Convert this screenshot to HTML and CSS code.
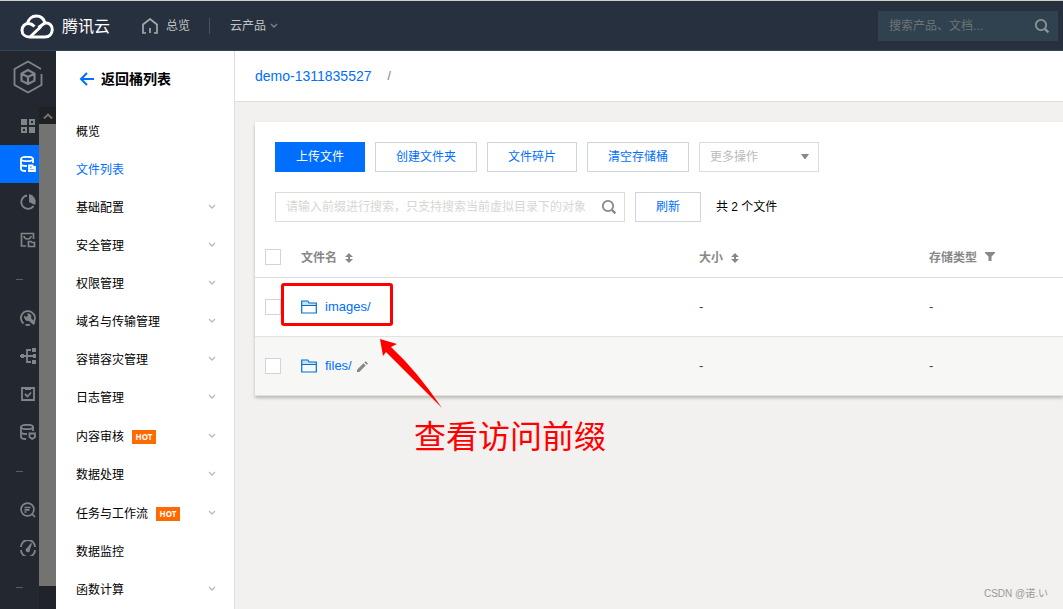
FILE: index.html
```html
<!DOCTYPE html>
<html lang="zh-CN">
<head>
<meta charset="utf-8">
<title>文件列表 - 腾讯云</title>
<link rel="stylesheet" href="styles.css">
</head>
<body>
<svg class="defs" aria-hidden="true">
  <symbol id="chev" viewBox="0 0 8 6"><path d="M1 1l3 3 3-3" fill="none" stroke="currentColor" stroke-width="1.3"/></symbol>
  <symbol id="search" viewBox="0 0 16 16"><circle cx="7" cy="7" r="5.2" fill="none" stroke="currentColor" stroke-width="1.8"/><path d="M11 11l3.4 3.4" stroke="currentColor" stroke-width="2.4"/></symbol>
  <symbol id="sort" viewBox="0 0 8 10"><path d="M4 0l4 4H5v2h3l-4 4-4-4h3V4H0z" fill="currentColor"/></symbol>
  <symbol id="folder" viewBox="0 0 16 14"><path d="M1 5V1h6l1.5 2H15v2z" fill="#c5e2f4"/><path d="M.7 1h6.1l1.2 2h7.3v10H.7zM.7 5.5h14.6" fill="none" stroke="#0071ce" stroke-width="1.2"/></symbol>
</svg>
<header class="topbar">
  <a class="brand" href="#">
    <svg class="brand-logo" viewBox="0 0 34 25"><g fill="none" stroke="#fff" stroke-width="3" stroke-linejoin="round"><path d="M18.5 13.5l6-4.3c5-1 8 2.6 7.8 6.5-.2 4-3 7.300-7.300 7.300H9.500c-4.500 0-7.500-3-7.500-6.800 0-4 3-6.700 6.500-6.700 2.800 0 4.300 1.200 6 3"/><path d="M7.500 9.500C8.500 5 12 2 16.300 2c4.200 0 7.500 2.600 8.600 6.800M10.500 22.500l10.500-10"/></g></svg>
    <span>腾讯云</span>
  </a>
  <nav class="topnav" aria-label="主导航">
    <a class="home" href="#"><svg class="i16" viewBox="0 0 16 16"><path d="M4 15H1V6.500L8 1l7 5.500V15h-3M8 15V10" fill="none" stroke="#a3aaa8" stroke-width="1.7"/></svg>总览</a>
    <span class="sep"></span>
    <a class="products" href="#">云产品<svg class="chev"><use href="#chev"/></svg></a>
  </nav>
  <form class="top-search">
    <input type="text" aria-label="搜索产品、文档" placeholder="搜索产品、文档...">
    <button type="button" aria-label="搜索"><svg class="i16"><use href="#search"/></svg></button>
  </form>
</header>
<div class="shell">
  <aside class="rail">
    <a class="hex" href="#" aria-label="控制台"><svg viewBox="0 0 30 34" fill="none" stroke="currentColor" stroke-width="1.8"><path d="M28.500 14V25L15 32.500 1.500 25V9L15 1.500 28 9"/><path stroke-width="2.2" d="M15 10l6.500 3.600v7L15 24l-6.500-3.400v-7zM8.500 13.600L15 17l6.500-3.400M15 17v7"/></svg></a>
    <div class="rail-body">
      <nav class="rail-nav" aria-label="产品">
        <a href="#" aria-label="概览"><svg class="i16" viewBox="0 0 16 16"><path fill="currentColor" d="M1 1h6v6H1zM9 9h6v6H9z"/><path fill="none" stroke="currentColor" stroke-width="2" d="M10 2h4v4h-4zM2 10h4v4H2z"/></svg></a>
        <a class="on" href="#" aria-label="存储桶列表"><svg class="i16" viewBox="0 0 16 16" fill="none" stroke="currentColor" stroke-width="1.8"><ellipse cx="7" cy="3" rx="6" ry="2.2"/><path d="M1 3v10c0 1 2 2 5 2M13 3v4M1 8c0 1.500 3 2 6 2"/><path d="M9 15h6v-4h-2.500V9.500H9zM9 12.500h6"/></svg></a>
        <a href="#" aria-label="统计"><svg class="i16" viewBox="0 0 16 16"><path d="M7 1.500A6.700 6.700 0 1 0 13.500 12" fill="none" stroke="currentColor" stroke-width="1.8"/><path fill="currentColor" d="M9 0a8 8 0 0 1 6 11L9 8z"/></svg></a>
        <a href="#" aria-label="文件"><svg class="i16" viewBox="0 0 16 16" fill="none" stroke="currentColor" stroke-width="1.7"><path d="M6 14H1.500V1.500h12V7M4 4c.5 4 6.500 4 7 0M8.500 14.500h6v-4H12l-1-1H8.500z"/></svg></a>
        <span class="rail-sep"></span>
        <a href="#" aria-label="工具"><svg class="i16" viewBox="0 0 16 16"><path d="M3.500 13.500A7 7 0 1 1 14 11.500M5.500 14.600a7 7 0 0 0 4.500 0" fill="none" stroke="currentColor" stroke-width="1.8"/><path fill="currentColor" d="M4 5.500l2.500 1.500L8 5.500 7 3.500c4-.5 5 2.500 4 4.500l4.500 4.500-2 2.500L9 11c-3 .5-5-2-5-5.500z"/></svg></a>
        <a href="#" aria-label="迁移"><svg class="i16" viewBox="0 0 16 16"><path d="M0 8h14M11 2H7v12h4" fill="none" stroke="currentColor" stroke-width="1.8"/><path fill="currentColor" d="M12 0h4v4h-4zM12 12h4v4h-4zM1 6h3v4H1zM13 6h3v4h-3z"/></svg></a>
        <a href="#" aria-label="任务"><svg class="i16" viewBox="0 0 16 16" fill="none" stroke="currentColor" stroke-width="1.8"><path d="M2 2h12v12H2zM5 3h6M5 8l2.500 2.500L11 6.500"/></svg></a>
        <a href="#" aria-label="数据"><svg class="i16" viewBox="0 0 16 16" fill="none" stroke="currentColor" stroke-width="1.8"><ellipse cx="7" cy="3" rx="6" ry="2.2"/><path d="M1 3v10c0 1 2 2 5 2M13 3v4M1 8c0 1.500 3 2 6 2"/><path d="M9.500 9.500H15v3.500L12.200 15 9.500 13z"/></svg></a>
        <span class="rail-sep"></span>
        <a href="#" aria-label="查询"><svg class="i16" viewBox="0 0 16 16" fill="none" stroke="currentColor" stroke-width="1.7"><circle cx="7.500" cy="7.500" r="6.400"/><path d="M12 12l3 3M4.500 5.500h6M4.500 7.800h5M4.500 10h2"/></svg></a>
        <a href="#" aria-label="监控"><svg class="i16" viewBox="0 0 16 16"><path d="M1 7a7 7 0 0 1 14 0M1 10a7 7 0 0 0 14 0" fill="none" stroke="currentColor" stroke-width="1.8"/><path fill="currentColor" d="M11 3l1 .5-2 6a2.200 2.200 0 1 1-3-1.500z"/></svg></a>
        <span class="rail-sep"></span>
      </nav>
      <div class="scroll"><button type="button" aria-label="向上滚动"><svg viewBox="0 0 10 6"><path d="M1 5.500l4-4 4 4" fill="none" stroke="currentColor" stroke-width="1.8"/></svg></button><div class="thumb"></div></div>
    </div>
  </aside>
  <nav class="menu" aria-label="存储桶">
    <a class="back" href="#"><svg class="i16" viewBox="0 0 16 16"><path d="M8 2L2 8l6 6M2 8h13" fill="none" stroke="#006eff" stroke-width="2"/></svg>返回桶列表</a>
    <a class="item" href="#">概览</a>
    <a class="item current" href="#">文件列表</a>
    <a class="item" href="#">基础配置<svg class="chev"><use href="#chev"/></svg></a>
    <a class="item" href="#">安全管理<svg class="chev"><use href="#chev"/></svg></a>
    <a class="item" href="#">权限管理<svg class="chev"><use href="#chev"/></svg></a>
    <a class="item" href="#">域名与传输管理<svg class="chev"><use href="#chev"/></svg></a>
    <a class="item" href="#">容错容灾管理<svg class="chev"><use href="#chev"/></svg></a>
    <a class="item" href="#">日志管理<svg class="chev"><use href="#chev"/></svg></a>
    <a class="item tagged" href="#">内容审核<span class="hot">HOT</span><svg class="chev"><use href="#chev"/></svg></a>
    <a class="item" href="#">数据处理<svg class="chev"><use href="#chev"/></svg></a>
    <a class="item tagged" href="#">任务与工作流<span class="hot">HOT</span><svg class="chev"><use href="#chev"/></svg></a>
    <a class="item" href="#">数据监控</a>
    <a class="item" href="#">函数计算<svg class="chev"><use href="#chev"/></svg></a>
  </nav>
  <main class="main">
    <div class="crumbs"><a href="#">demo-1311835527</a><span>/</span></div>
    <section class="card">
      <div class="tools">
        <button type="button" class="btn primary">上传文件</button>
        <button type="button" class="btn">创建文件夹</button>
        <button type="button" class="btn">文件碎片</button>
        <button type="button" class="btn">清空存储桶</button>
        <div class="more"><select aria-label="更多操作"><option>更多操作</option></select><svg viewBox="0 0 8 6"><path d="M0 0h8L4.500 5h-1z" fill="#888"/></svg></div>
      </div>
      <div class="tools">
        <div class="find"><input type="text" aria-label="前缀搜索" placeholder="请输入前缀进行搜索，只支持搜索当前虚拟目录下的对象"><button type="button" aria-label="搜索"><svg class="i16"><use href="#search"/></svg></button></div>
        <button type="button" class="btn">刷新</button>
        <span class="count">共 2 个文件</span>
      </div>
      <table class="files">
        <colgroup><col class="c-check"><col><col class="c-size"><col class="c-type"></colgroup>
        <thead><tr>
          <th><input type="checkbox" aria-label="全选"></th>
          <th><span class="cell">文件名<svg class="sort"><use href="#sort"/></svg></span></th>
          <th><span class="cell">大小<svg class="sort"><use href="#sort"/></svg></span></th>
          <th><span class="cell">存储类型<svg class="filter" viewBox="0 0 10 10"><path d="M0 0h10v1L6.500 4.500V9h-3V4.500L0 1z" fill="currentColor"/></svg></span></th>
        </tr></thead>
        <tbody>
          <tr><td><input type="checkbox" aria-label="选择 images/"></td><td><a class="cell" href="#"><svg class="folder"><use href="#folder"/></svg>images/</a></td><td>-</td><td>-</td></tr>
          <tr class="hover"><td><input type="checkbox" aria-label="选择 files/"></td><td><a class="cell" href="#"><svg class="folder"><use href="#folder"/></svg>files/<svg class="pencil" viewBox="0 0 12 12"><path d="M0 12V9.500l7-7L9.500 5l-7 7zM8 1.700L9.500.2 12 2.700l-1.500 1.500z" fill="#888"/></svg></a></td><td>-</td><td>-</td></tr>
        </tbody>
      </table>
      <div class="mark-box"></div>
      <svg class="mark-arrow" viewBox="0 0 62 70"><path d="M0 0l17 5-6 3Q37 32 62 69L6 13l-3 4z" fill="#f00"/></svg>
      <p class="mark-text">查看访问前缀</p>
    </section>
    <span class="credit">CSDN @诺.い</span>
  </main>
</div>
</body>
</html>
```
FILE: styles.css
```css
* { box-sizing: border-box; }
body {
  margin: 0;
  height: 100vh;
  overflow: hidden;
  display: flex;
  flex-direction: column;
  background: #f2f1ef;
  color: #000;
  font: 12px/18px "Liberation Sans", "Noto Sans CJK SC", sans-serif;
}
a { color: inherit; text-decoration: none; }
button, input, select { font: inherit; color: inherit; border-radius: 0; }
button { padding: 0; border: 0; background: none; cursor: pointer; }
svg { display: block; flex: none; }
.defs { display: none; }
.i16 { width: 16px; height: 16px; }
.chev { width: 8px; height: 6px; }

.topbar {
  flex: none;
  height: 51px;
  display: flex;
  align-items: center;
  padding: 0 5px 0 20px;
  background: #27303f;
  border-top: 1px solid #cdcfc3;
  border-bottom: 1px solid #304555;
  color: #c0c4c4;
}
.brand { display: flex; align-items: center; gap: 8px; padding-top: 2px; color: #fff; font-size: 16px; line-height: 24px; }
.brand-logo { width: 34px; height: 25px; }
.topnav { display: flex; align-items: center; margin-left: 32px; }
.home { display: flex; align-items: center; gap: 8px; }
.sep { width: 1px; height: 16px; margin: 0 20px 0 19px; background: #4a525e; }
.products { display: flex; align-items: center; gap: 4px; }
.products .chev { color: #7c8488; }
.top-search {
  display: flex;
  align-items: center;
  width: 180px;
  height: 30px;
  margin-left: auto;
  padding: 0 8px 0 11px;
  background: #304250;
  color: #8d9696;
}
.top-search input { flex: 1; min-width: 0; padding: 0; border: 0; background: none; color: #fff; outline: 0; }
.top-search input::placeholder { color: #6d7475; opacity: 1; }

.shell { flex: 1; min-height: 0; display: flex; }
.rail { flex: none; width: 56px; display: flex; flex-direction: column; background: #232730; color: #7d8786; }
.hex { flex: none; height: 56px; display: grid; place-items: center; padding-bottom: 4px; }
.hex svg { width: 30px; height: 34px; }
.rail-body { flex: 1; min-height: 0; display: flex; }
.rail-nav { flex: 1; display: flex; flex-direction: column; }
.rail-nav a { flex: none; height: 38px; display: flex; align-items: center; justify-content: flex-end; padding-right: 3px; }
.rail-nav .on { background: #006eff; color: #fff; }
.rail-sep { flex: none; height: 40px; display: flex; align-items: center; padding-left: 16px; }
.rail-sep::before { content: ""; width: 7px; height: 1px; background: #555c62; }
.scroll { flex: none; width: 17px; display: flex; flex-direction: column; padding-bottom: 23px; background: #202329; }
.scroll button { height: 17px; display: grid; place-items: center; color: #777; background: #202124; }
.scroll svg { width: 10px; height: 6px; }
.thumb { flex: 1; background: #737472; }

.menu { flex: none; width: 179px; overflow: hidden; background: #fff; border-right: 1px solid #dddfd9; }
.back { display: flex; align-items: center; gap: 6px; height: 61px; padding: 0 0 6px 23px; font-size: 14px; font-weight: bold; }
.item { display: flex; align-items: center; height: 38px; padding: 2px 18px 0 20px; }
.item .chev { margin: 0 0 2px auto; color: #bbb; }
.current { color: #006eff; }
.tagged { height: 39px; }
.hot { width: 24px; margin-left: 8px; background: #ff6a00; color: #fff; font: bold 8px/14px "Noto Sans", sans-serif; text-align: center; }

.main { flex: 1; min-width: 0; position: relative; }
.crumbs { display: flex; gap: 16px; height: 51px; align-items: center; padding-left: 20px; background: #fff; border-bottom: 1px solid #ddd; font-size: 14px; color: #777; }
.crumbs a { color: #006eff; }
.crumbs span { font-size: 12px; }
.card { position: relative; margin: 20px 0 0 20px; padding-top: 20px; background: #fff; box-shadow: 0 2px 3px rgba(54, 58, 40, .3); }
.tools { display: flex; align-items: center; gap: 10px; margin: 0 20px 20px; }
.btn { height: 30px; padding: 0 20px; border: 1px solid #cfd5de; background: #fff; color: #006eff; }
.primary { border-color: #006eff; background: #006eff; color: #fff; }
.more { display: grid; width: 120px; height: 30px; align-items: center; }
.more > * { grid-area: 1 / 1; }
.more select { height: 30px; padding: 0 10px; appearance: none; border: 1px solid #ddddd8; background: #fff; color: #bbb; opacity: 1; }
.more svg { width: 8px; height: 6px; justify-self: end; margin-right: 10px; pointer-events: none; }
.find { display: flex; align-items: center; width: 350px; height: 30px; padding: 0 7px 0 10px; border: 1px solid #ddddd8; color: #888; }
.find input { flex: 1; min-width: 0; padding: 0; border: 0; outline: 0; }
.find input::placeholder { color: #d8d6d3; opacity: 1; }
.count { margin-left: 5px; }

.files { width: 100%; margin-top: -5px; border-collapse: separate; border-spacing: 0; table-layout: fixed; }
.c-check { width: 36px; }
.c-size { width: 230px; }
.c-type { width: 144px; }
.files th, .files td { height: 59px; padding: 0 10px; border-bottom: 1px solid #e2e2e0; text-align: left; vertical-align: middle; }
.files th { height: 41px; border-color: #ddd; color: #888; }
.files th .cell { padding-top: 2px; }
.files td { font-size: 13px; color: #444; }
.files a { color: #006eff; }
.cell { display: flex; align-items: center; gap: 8px; }
.hover { background: #f7f7f5; }
.files input { display: block; width: 16px; height: 16px; margin: 0; appearance: none; border: 1px solid #cfd5de; background: #fff; }
.sort { width: 8px; height: 10px; }
.filter { width: 10px; height: 10px; margin-bottom: 2px; }
.folder { width: 16px; height: 14px; }
.pencil { width: 11px; height: 11px; margin-left: -3px; }

.mark-box { position: absolute; left: 26px; top: 161px; width: 112px; height: 43px; border: 3px solid #f00; border-radius: 3px; }
.mark-arrow { position: absolute; left: 125px; top: 217px; width: 62px; height: 70px; }
.mark-text { position: absolute; left: 159px; top: 291px; margin: 0; color: #f00; font-size: 32px; line-height: 48px; white-space: nowrap; }
.credit { position: absolute; right: 15px; bottom: 6px; color: #999; font-size: 10px; }
```
